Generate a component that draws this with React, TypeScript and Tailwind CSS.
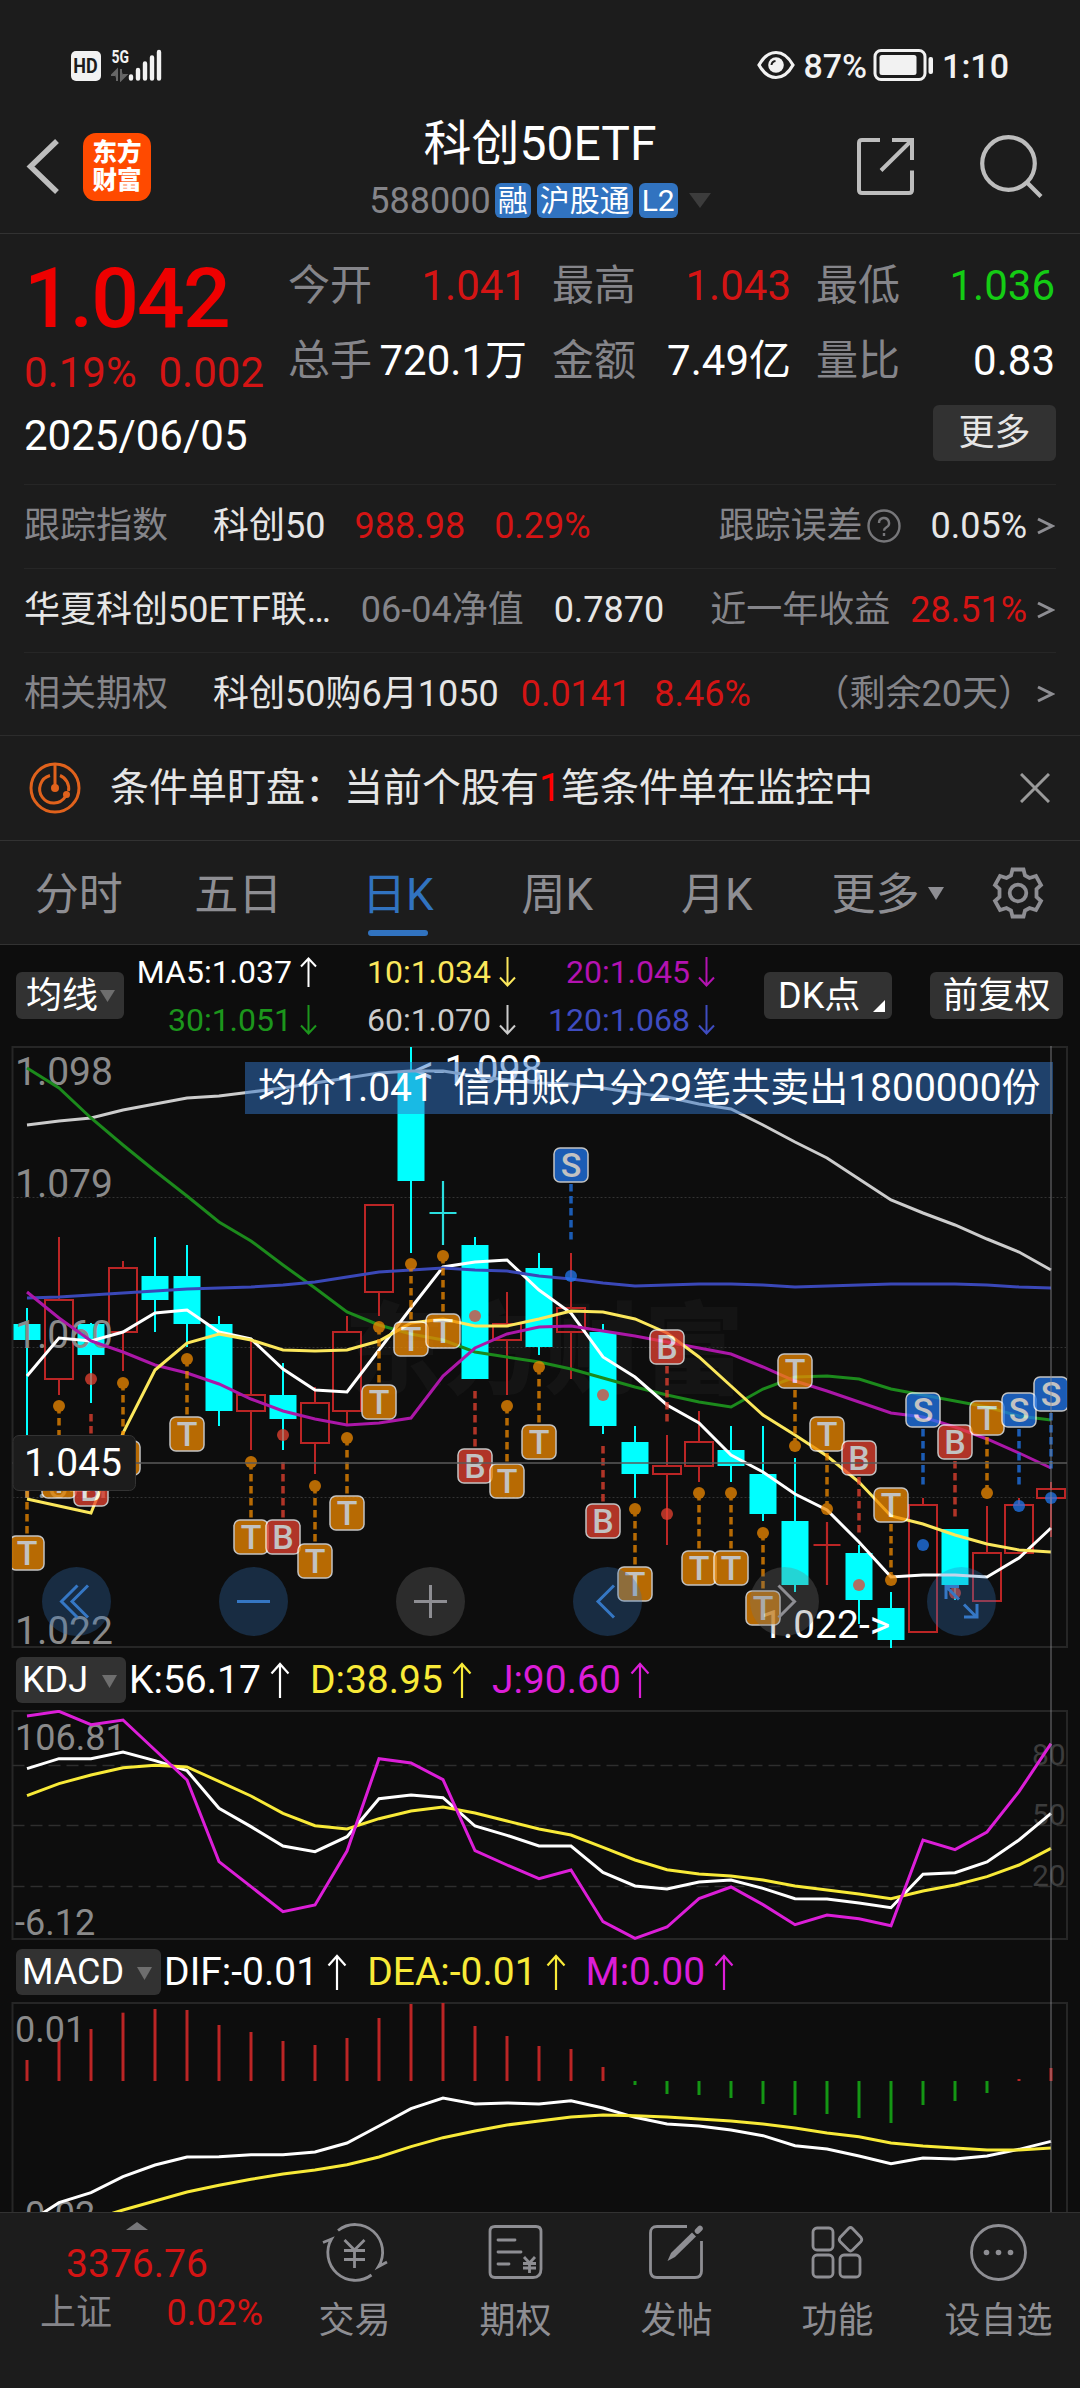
import type { ReactNode } from "react";

const X0 = 27;
const STEP = 32;
const cx = (i: number) => X0 + i * STEP;
const toPoints = (ys: number[]) => ys.map((y, i) => `${cx(i)},${y}`).join(" ");

const CYAN = "#00ffff";
const RED = "#bb2525";

// [up/down, high, low, body top, body bottom]
type Candle = ["u" | "d", number, number, number, number];

const CANDLES: Candle[] = [
  ["d", 1308, 1470, 1324, 1340],
  ["u", 1237, 1395, 1300, 1379],
  ["d", 1323, 1403, 1324, 1355],
  ["u", 1261, 1371, 1268, 1332],
  ["d", 1237, 1332, 1276, 1300],
  ["d", 1245, 1347, 1276, 1324],
  ["d", 1316, 1426, 1324, 1411],
  ["u", 1340, 1450, 1395, 1411],
  ["d", 1363, 1450, 1395, 1419],
  ["u", 1387, 1474, 1403, 1443],
  ["u", 1316, 1425, 1332, 1411],
  ["u", 1205, 1316, 1205, 1292],
  ["d", 1047, 1253, 1071, 1181],
  ["d", 1181, 1245, 1213, 1213],
  ["d", 1237, 1379, 1245, 1379],
  ["u", 1292, 1395, 1324, 1340],
  ["d", 1253, 1355, 1268, 1347],
  ["u", 1253, 1379, 1308, 1332],
  ["d", 1324, 1434, 1332, 1426],
  ["d", 1426, 1498, 1442, 1474],
  ["u", 1435, 1545, 1466, 1474],
  ["u", 1411, 1482, 1442, 1466],
  ["d", 1426, 1482, 1450, 1466],
  ["d", 1426, 1521, 1474, 1514],
  ["d", 1458, 1592, 1521, 1585],
  ["u", 1522, 1585, 1545, 1545],
  ["d", 1545, 1624, 1553, 1600],
  ["d", 1592, 1648, 1608, 1640],
  ["u", 1498, 1632, 1505, 1632],
  ["d", 1529, 1600, 1529, 1585],
  ["u", 1506, 1601, 1553, 1601],
  ["u", 1498, 1553, 1505, 1553],
  ["u", 1482, 1537, 1489, 1498],
];

const MA_LINES = [
  {
    color: "#cccccc",
    ys: [1125, 1121, 1118, 1110, 1104, 1098, 1096, 1092, 1088, 1083, 1078, 1073, 1071, 1071, 1076, 1080, 1083, 1084, 1088, 1093, 1097, 1104, 1109, 1125, 1142, 1158, 1179, 1200, 1213, 1225, 1239, 1252, 1270],
  },
  {
    color: "#1c8a1c",
    ys: [1068, 1088, 1118, 1145, 1171, 1196, 1222, 1241, 1265, 1288, 1312, 1325, 1334, 1340, 1352, 1357, 1362, 1369, 1378, 1387, 1395, 1402, 1407, 1389, 1377, 1376, 1379, 1389, 1395, 1401, 1407, 1416, 1420],
  },
  {
    color: "#ffffff",
    ys: [1376, 1338, 1341, 1332, 1313, 1310, 1332, 1339, 1369, 1390, 1392, 1350, 1308, 1267, 1262, 1260, 1290, 1313, 1357, 1377, 1405, 1423, 1455, 1472, 1494, 1510, 1542, 1577, 1575, 1575, 1577, 1558, 1528],
  },
  {
    color: "#3a48b8",
    ys: [1298, 1297, 1295, 1293, 1291, 1289, 1288, 1287, 1285, 1282, 1277, 1272, 1270, 1268, 1270, 1271, 1276, 1279, 1283, 1286, 1285, 1284, 1284, 1285, 1287, 1286, 1285, 1284, 1284, 1284, 1285, 1287, 1288],
  },
  {
    color: "#ab17a8",
    ys: [1292, 1318, 1341, 1352, 1365, 1373, 1384, 1399, 1411, 1419, 1425, 1423, 1418, 1376, 1348, 1334, 1327, 1326, 1331, 1336, 1342, 1348, 1354, 1367, 1381, 1391, 1402, 1413, 1417, 1427, 1439, 1453, 1468],
  },
  {
    color: "#fbe75c",
    ys: [1499, 1506, 1513, 1433, 1370, 1343, 1334, 1340, 1350, 1351, 1350, 1341, 1323, 1319, 1326, 1326, 1319, 1311, 1312, 1319, 1333, 1357, 1386, 1415, 1435, 1456, 1482, 1516, 1524, 1535, 1544, 1550, 1552],
  },
];

// index, letter, tag centre, dot centre
type Mark = [number, "T" | "B" | "S", number, number];

const MARKS: Mark[] = [
  [0, "T", 1553, 1478],
  [1, "T", 1481, 1406],
  [2, "B", 1489, 1379],
  [3, "T", 1458, 1383],
  [5, "T", 1434, 1359],
  [7, "T", 1537, 1462],
  [8, "B", 1537, 1435],
  [9, "T", 1561, 1486],
  [10, "T", 1513, 1438],
  [11, "T", 1402, 1327],
  [12, "T", 1339, 1264],
  [13, "T", 1331, 1256],
  [14, "B", 1466, 1316],
  [15, "T", 1481, 1406],
  [16, "T", 1442, 1367],
  [17, "S", 1165, 1276],
  [18, "B", 1521, 1395],
  [19, "T", 1584, 1509],
  [20, "B", 1347, 1514],
  [21, "T", 1568, 1493],
  [22, "T", 1568, 1493],
  [23, "T", 1608, 1533],
  [24, "T", 1371, 1446],
  [25, "T", 1434, 1509],
  [26, "B", 1458, 1585],
  [27, "T", 1505, 1580],
  [28, "S", 1410, 1545],
  [29, "B", 1442, 1593],
  [30, "T", 1418, 1493],
  [31, "S", 1410, 1506],
  [32, "S", 1394, 1498],
];

const MARK_COLORS = { T: "#f08a00", B: "#e74130", S: "#2077ed" };

const kdjY = (p: number) => 1640 + p / 3;
const KDJ_K = [386, 356, 356, 336, 362, 392, 505, 560, 618, 635, 590, 476, 465, 473, 558, 586, 618, 618, 697, 738, 747, 726, 720, 745, 776, 777, 789, 803, 703, 698, 666, 600, 520].map(kdjY);
const KDJ_D = [467, 431, 405, 383, 376, 381, 424, 468, 520, 557, 567, 536, 513, 501, 519, 543, 567, 585, 622, 660, 689, 702, 708, 720, 738, 750, 762, 776, 753, 735, 710, 675, 625].map(kdjY);
const KDJ_J = [228, 214, 254, 240, 330, 420, 665, 740, 815, 795, 633, 356, 369, 419, 632, 675, 716, 690, 845, 895, 861, 776, 741, 794, 854, 825, 836, 857, 600, 629, 576, 455, 311].map(kdjY);

const macdY = (p: number) => 1980 + p / 3;
const MACD_ZERO = 2081;
const MACD_BARS = [240, 180, 147, 98, 87, 90, 135, 156, 183, 195, 174, 114, 72, 69, 138, 168, 198, 207, 261, 315, 342, 345, 354, 372, 405, 402, 414, 429, 375, 363, 339, 297, 264].map(macdY);
const MACD_DIF = [730, 668, 638, 590, 555, 531, 530, 524, 524, 516, 489, 438, 386, 354, 372, 369, 372, 362, 384, 412, 432, 438, 450, 467, 497, 507, 528, 551, 534, 537, 528, 508, 484].map(macdY);
const MACD_DEA = [790, 752, 720, 690, 663, 636, 616, 598, 582, 570, 554, 531, 500, 473, 453, 435, 423, 411, 405, 407, 411, 417, 423, 432, 444, 459, 470, 489, 498, 504, 510, 510, 504].map(macdY);

function StatusBar() {
  return (
    <div className="flex h-[87px] items-end justify-between pr-[71px] pb-[5px] pl-[71px] text-[#f2f2f2]">
      <div className="flex items-end">
        <div className="mb-px flex h-[30px] w-[30px] items-center justify-center rounded-[5px] bg-[#f2f2f2] text-[20px] leading-none font-bold text-[#1c1c1c]">
          <span className="scale-x-90">HD</span>
        </div>
        <svg className="ml-[10px]" width="52" height="34" viewBox="111 48 52 34">
          <text x="111.500" y="63.300" fontSize="18.500" fontWeight="700" fill="#f2f2f2" textLength="17.500" lengthAdjust="spacingAndGlyphs">5G</text>
          <path d="M117 81V70L112 75H115M121 69V80L126 75H123" fill="#666" stroke="#666" strokeWidth="2" />
          <g stroke="#f2f2f2" strokeWidth="4.400" strokeLinecap="round">
            <path d="M131 76.500v2M138 70v8.500M145 63.500v15M152 57.500v21M159 52v26.500" />
          </g>
        </svg>
      </div>
      <div className="flex h-[34px] items-center text-[34px] leading-none font-medium">
        <svg width="38" height="30" viewBox="0 0 38 30" fill="none">
          <path d="M2 15C7 6 13 2.500 19 2.500S31 6 36 15C31 24 25 27.500 19 27.500S7 24 2 15Z" stroke="#f2f2f2" strokeWidth="3.200" />
          <circle cx="19" cy="15" r="7.800" fill="#f2f2f2" />
          <path d="M14.500 15a4.500 4.500 0 0 1 4-4" stroke="#1c1c1c" strokeWidth="2" />
        </svg>
        <span className="mt-px ml-[8px]">87%</span>
        <svg className="ml-[6px]" width="62" height="34" viewBox="0 0 62 34">
          <rect x="2" y="2.500" width="50" height="29" rx="6" fill="none" stroke="#f2f2f2" strokeWidth="3" />
          <rect x="6.500" y="7" width="37" height="20" rx="2.500" fill="#f2f2f2" />
          <rect x="55.500" y="9" width="4.500" height="17" rx="2" fill="#f2f2f2" />
        </svg>
        <span className="mt-px ml-[7px]">1:10</span>
      </div>
    </div>
  );
}

const BADGES = ["融", "沪股通", "L2"];

function Header() {
  return (
    <header className="flex h-[147px] items-start border-b border-[#323232] pr-[36px] pl-[26px]">
      <svg className="mt-[51px]" width="34" height="56" viewBox="26 138 34 56" fill="none">
        <path d="M57 141L30.500 166.500L57 192" stroke="#bdbdbd" strokeWidth="5.500" />
      </svg>
      <div className="mt-[46px] ml-[23px] flex h-[68px] w-[68px] flex-col items-center justify-center rounded-[13px] bg-[#ff4a00] text-[24.500px] leading-[28px] font-black text-white">
        <span>东方</span>
        <span>财富</span>
      </div>
      <div className="ml-[217px] flex w-[344px] flex-col items-center">
        <h1 className="mt-[33px] text-[48px] leading-[48px] text-white">科创50ETF</h1>
        <div className="mt-[15px] flex h-[35px] items-center text-[36px] leading-none whitespace-nowrap text-[#85858a]">
          <span className="-mr-[2px]">588000</span>
          {BADGES.map((b) => (
            <span key={b} className="ml-[6px] flex h-[35px] items-center rounded-[6px] bg-[#3173c0] px-[3px] text-[30px] leading-none text-white">
              {b}
            </span>
          ))}
          <svg className="ml-[11px]" width="22" height="15" viewBox="0 0 22 15">
            <path d="M0 0H22L11 15Z" fill="#3c3c3c" />
          </svg>
        </div>
      </div>
      <svg className="mt-[49px] ml-auto" width="62" height="62" viewBox="856 136 62 62" fill="none" stroke="#bdbdbd" strokeWidth="4">
        <path d="M881 140H863Q860 140 860 143V190Q860 193 863 193H910Q913 193 913 190V170.500" />
        <path d="M893 140H913V160M912 141L882 170.500" />
      </svg>
      <svg className="mt-[47px] ml-[61px]" width="66" height="66" viewBox="979 134 66 66" fill="none" stroke="#bdbdbd" strokeWidth="4.200">
        <circle cx="1009.500" cy="163.500" r="26.300" />
        <path d="M1028 182.500L1042 196.500" />
      </svg>
    </header>
  );
}

const QUOTES = [
  { label: "今开", value: "1.041", tone: "text-[#d41414]" },
  { label: "最高", value: "1.043", tone: "text-[#d41414]" },
  { label: "最低", value: "1.036", tone: "text-[#14cc14]" },
  { label: "总手", value: "720.1万", tone: "text-white" },
  { label: "金额", value: "7.49亿", tone: "text-white" },
  { label: "量比", value: "0.83", tone: "text-white" },
];

function Quote() {
  return (
    <section className="h-[250px] px-[24px] text-[42px] leading-none">
      <div className="flex h-[163px]">
        <div className="w-[264px] text-[#d41414]">
          <div className="mt-[23px] text-[84px] leading-[84px] font-medium tracking-[-1.900px] text-[#ee0000]">1.042</div>
          <div className="mt-[11px] flex justify-between pr-[24px] leading-[42px]">
            <span>0.19%</span>
            <span>0.002</span>
          </div>
        </div>
        <div className="mt-[31px] grid w-[767px] grid-cols-3 gap-x-[25px] gap-y-[33px] self-start">
          {QUOTES.map((q) => (
            <div key={q.label} className="flex h-[42px] items-center justify-between whitespace-nowrap">
              <span className="text-[#85858a]">{q.label}</span>
              <span className={q.tone}>{q.value}</span>
            </div>
          ))}
        </div>
      </div>
      <div className="mt-[8px] flex h-[56px] items-center justify-between">
        <span className="mt-[5px] text-white">2025/06/05</span>
        <button className="h-[56px] w-[123px] rounded-[6px] bg-[#323232] text-[36px] leading-none text-[#e6e6e6]">更多</button>
      </div>
    </section>
  );
}

function InfoRow({ children }: { children: ReactNode }) {
  return (
    <div className="mx-[24px] flex h-[84px] items-center border-t border-[#262626] pr-px pb-[2px] text-[36px] leading-none whitespace-nowrap text-[#e6e6e6]">
      {children}
      <svg className="ml-[9px]" width="19" height="20" viewBox="0 0 19 20" fill="none">
        <path d="M2 3L16 10L2 17" stroke="#8e8e93" strokeWidth="3" />
      </svg>
    </div>
  );
}

function InfoRows() {
  return (
    <section className="h-[251px]">
      <InfoRow>
        <span className="text-[#85858a]">跟踪指数</span>
        <span className="ml-[45px]">科创50</span>
        <span className="ml-[29px] text-[#d41414]">988.98</span>
        <span className="ml-[29px] text-[#d41414]">0.29%</span>
        <span className="ml-auto text-[#85858a]">跟踪误差</span>
        <svg className="ml-[5px]" width="34" height="34" viewBox="0 0 34 34" fill="none">
          <circle cx="17" cy="17" r="15.500" stroke="#77777a" strokeWidth="2.400" />
          <path d="M12 14a5 5 0 1 1 7.500 4.300c-1.800 1-2.500 1.700-2.500 3.500M17 24v3" stroke="#77777a" strokeWidth="2.400" />
        </svg>
        <span className="ml-[29px]">0.05%</span>
      </InfoRow>
      <InfoRow>
        <span>华夏科创50ETF联…</span>
        <span className="ml-[30px] text-[#85858a]">06-04净值</span>
        <span className="ml-[30px]">0.7870</span>
        <span className="ml-auto text-[#85858a]">近一年收益</span>
        <span className="ml-[20px] text-[#d41414]">28.51%</span>
      </InfoRow>
      <InfoRow>
        <span className="text-[#85858a]">相关期权</span>
        <span className="ml-[45px]">科创50购6月1050</span>
        <span className="ml-[22px] text-[#d41414]">0.0141</span>
        <span className="ml-[23px] text-[#d41414]">8.46%</span>
        <span className="-mr-[7px] ml-auto text-[#85858a]">（剩余20天）</span>
      </InfoRow>
    </section>
  );
}

function AlertBar() {
  return (
    <div className="flex h-[105px] items-center border-t border-[#2c2c2c] pr-[30px] pl-[28px] text-[39px] leading-none text-[#e6e6e6]">
      <svg width="54" height="54" viewBox="0 0 54 54" fill="none" stroke="#e0621c" strokeWidth="3">
        <circle cx="27" cy="27" r="24" />
        <path d="M22 14.500A14 14 0 1 0 37.500 35.500M32 14.500A14 14 0 0 1 40.500 30" />
        <path d="M27 3V27" />
        <circle cx="27" cy="27" r="4" fill="#e0621c" stroke="none" />
        <circle cx="38.500" cy="33.500" r="3.500" fill="#e0621c" stroke="none" />
      </svg>
      <span className="ml-[28px] whitespace-nowrap">
        条件单盯盘：当前个股有<span className="text-[#ff0000]">1</span>笔条件单在监控中
      </span>
      <svg className="ml-auto" width="30" height="30" viewBox="0 0 30 30" stroke="#9a9a9a" strokeWidth="3">
        <path d="M1 1L29 29M29 1L1 29" />
      </svg>
    </div>
  );
}

const TABS = ["分时", "五日", "日K", "周K", "月K"];

function Tabs() {
  return (
    <nav className="flex h-[105px] items-center border-y border-[#323232] text-[44px] leading-none text-[#8e8e93]">
      {TABS.map((tab) => {
        const active = tab === "日K";
        return (
          <div key={tab} className={`relative flex h-full w-[159.500px] items-center justify-center pt-[4px] pr-[2px] ${active ? "text-[#3173c0]" : ""}`}>
            {tab}
            {active && <div className="absolute bottom-[8px] left-[49px] h-[6px] w-[60px] rounded-full bg-[#3173c0]" />}
          </div>
        );
      })}
      <div className="ml-[34px] flex items-center pt-[4px]">
        更多
        <svg className="mb-[3px] ml-[8px]" width="16" height="13" viewBox="0 0 16 13">
          <path d="M0 0H16L8 13Z" fill="#8e8e93" />
        </svg>
      </div>
      <svg className="ml-[46px]" width="56" height="56" viewBox="-28 -28 56 56" fill="none" stroke="#8e8e93" strokeWidth="3.800">
        <path d="M-5.500 -23.500H5.500L7 -17.500L11.500 -15L18 -17L23 -8L18.500 -4V4L23 8L18 17L11.500 15L7 17.500L5.500 23.500H-5.500L-7 17.500L-11.500 15L-18 17L-23 8L-18.500 4V-4L-23 -8L-18 -17L-11.500 -15L-7 -17.500Z" />
        <circle r="8.300" />
      </svg>
    </nav>
  );
}

function Arrow({ up, small }: { up?: boolean; small?: boolean }) {
  return (
    <svg
      className={`shrink-0 ${up ? "" : "rotate-180"}`}
      width={small ? 17 : 20}
      height={small ? 30 : 36}
      viewBox={small ? "0 0 17 30" : "0 0 20 36"}
      fill="none"
      stroke="currentColor"
      strokeWidth={small ? 2 : 2.2}
    >
      <path d={small ? "M8.500 30V1.500M1 9.500L8.500 1.500L16 9.500" : "M10 36V2M1.500 11.500L10 2L18.500 11.500"} />
    </svg>
  );
}

function MaCell({ text, tone, up }: { text: string; tone: string; up?: boolean }) {
  return (
    <div className={`flex items-center justify-end gap-[8px] ${tone}`}>
      {text}
      <Arrow small up={up} />
    </div>
  );
}

function MaPanel() {
  return (
    <div className="flex h-[101px] pl-[16px] leading-none">
      <div className="mt-[27px] flex h-[47px] w-[108px] items-center rounded-[6px] bg-[#323232] pl-[10px] text-[36px] text-white">
        <span>均线</span>
        <svg className="ml-[2px]" width="15" height="12" viewBox="0 0 15 12">
          <path d="M0 0H15L7.500 12Z" fill="#6e6e6e" />
        </svg>
      </div>
      <div className="mt-[9px] grid grid-cols-[193px_199px_199px] grid-rows-[36px_36px] gap-y-[12px] text-[32px] whitespace-nowrap">
        <MaCell text="MA5:1.037" tone="text-white" up />
        <MaCell text="10:1.034" tone="text-[#fbe75c]" />
        <MaCell text="20:1.045" tone="text-[#b412b1]" />
        <MaCell text="30:1.051" tone="text-[#1c961c]" />
        <MaCell text="60:1.070" tone="text-[#cccccc]" />
        <MaCell text="120:1.068" tone="text-[#3f4cc0]" />
      </div>
      <div className="relative mt-[27px] ml-[49px] flex h-[47px] w-[128px] items-center rounded-[6px] bg-[#323232] pl-[14px] text-[36px] text-white">
        DK点
        <svg className="absolute right-[7px] bottom-[7px]" width="12" height="12" viewBox="0 0 12 12">
          <path d="M12 0V12H0Z" fill="#fff" />
        </svg>
      </div>
      <div className="mt-[27px] ml-[38px] flex h-[47px] w-[133px] items-center justify-center rounded-[6px] bg-[#323232] text-[36px] whitespace-nowrap text-white">前复权</div>
    </div>
  );
}

function CandleShape({ i, candle }: { i: number; candle: Candle }) {
  const [dir, high, low, top, bottom] = candle;
  const x = cx(i);
  const color = dir === "u" ? RED : CYAN;
  if (top === bottom) {
    return <path d={`M${x} ${high}V${low}M${x - 13.5} ${top}H${x + 13.5}`} stroke={dir === "u" ? RED : "#2adfe0"} strokeWidth="2.200" />;
  }
  return (
    <g stroke={color} strokeWidth="2">
      <path d={`M${x} ${high}V${top}M${x} ${bottom}V${low}`} />
      {dir === "u" ? (
        <rect x={x - 14} y={top} width="28" height={bottom - top} fill="none" />
      ) : (
        <rect x={x - 13.5} y={top} width="27" height={bottom - top} fill={color} stroke="none" />
      )}
    </g>
  );
}

function MarkShape({ mark: [i, letter, tagY, dotY] }: { mark: Mark }) {
  const x = cx(i);
  const color = MARK_COLORS[letter];
  const below = tagY > dotY;
  return (
    <g opacity="0.75">
      <path d={below ? `M${x} ${tagY - 75}V${tagY - 18}` : `M${x} ${tagY + 19}V${tagY + 75}`} stroke={color} strokeWidth="3.500" strokeDasharray="7.500 4.500" />
      <circle cx={x} cy={dotY} r="6" fill={color} />
      <rect x={x - 17} y={tagY - 17} width="34" height="34" rx="6" fill={color} stroke="#fff" strokeWidth="1.500" />
      <text x={x} y={tagY + 12} fontSize="34" fontWeight="500" textAnchor="middle" fill="#fff">{letter}</text>
    </g>
  );
}

function RoundButton({ gray, children }: { gray?: boolean; children: ReactNode }) {
  return (
    <button className={`h-[69px] w-[69px] rounded-full ${gray ? "bg-[#737373]/30 text-[#8e8e93]" : "bg-[#3175be]/30 text-[#3577c4]"}`}>
      <svg width="69" height="69" viewBox="0 0 69 69" fill="none" stroke="currentColor" strokeWidth="3">
        {children}
      </svg>
    </button>
  );
}

function PriceChart() {
  return (
    <div className="relative">
      <svg className="block" width="1080" height="602" viewBox="0 1046 1080 602">
        <defs>
          <clipPath id="plot">
            <rect x="12" y="1046" width="1055" height="602" />
          </clipPath>
        </defs>
        <text x="344" y="1386" fontSize="100" fontWeight="900" fill="#141414">东方财富</text>
        <path d="M12.500 1197.500H1067M12.500 1347.500H1067M12.500 1497.500H1067" stroke="#333" strokeWidth="1" strokeDasharray="2 2" />
        <rect x="12.500" y="1047" width="1054.500" height="600" fill="none" stroke="#262626" strokeWidth="2" />
        <g clipPath="url(#plot)">
          {CANDLES.map((c, i) => (
            <CandleShape key={i} i={i} candle={c} />
          ))}
          <g fontSize="39" fill="#8a8a8a">
            <text x="15" y="1085">1.098</text>
            <text x="15" y="1197">1.079</text>
            <text x="15" y="1348">1.060</text>
            <text x="15" y="1498">1.041</text>
            <text x="15" y="1643.500">1.022</text>
          </g>
          <g fontSize="39" fill="#fff">
            <text x="414" y="1083">&lt;-1.098</text>
            <text x="761" y="1638">1.022-&gt;</text>
          </g>
          {MA_LINES.map((l) => (
            <polyline key={l.color} points={toPoints(l.ys)} fill="none" stroke={l.color} strokeWidth="3" />
          ))}
          {MARKS.map((m) => (
            <MarkShape key={m[0]} mark={m} />
          ))}
        </g>
        <path d="M12.500 1463H1067" stroke="#5a5a5a" strokeWidth="1.500" />
        <rect x="13" y="1435.500" width="122.500" height="55" rx="6" fill="#1c1c1c" stroke="#333" />
        <text x="24" y="1476" fontSize="39" fill="#fff">1.045</text>
      </svg>
      <div className="absolute top-[16px] left-[245px] flex h-[52px] w-[808px] items-center bg-[#3175c9]/50 pl-[13px] text-[39px] leading-none whitespace-pre text-white">
        {"均价1.041  信用账户分29笔共卖出1800000份"}
      </div>
      <div className="absolute top-[521px] left-[42px] flex gap-[108px]">
        <RoundButton>
          <path d="M35.500 18.500L19.500 34.500L35.500 50.500M46 18.500L30 34.500L46 50.500" />
        </RoundButton>
        <RoundButton>
          <path d="M18 34.500H51" />
        </RoundButton>
        <RoundButton gray>
          <path d="M18 34.500H51M34.500 18V51" />
        </RoundButton>
        <RoundButton>
          <path d="M41 18.500L25 34.500L41 50.500" />
        </RoundButton>
        <RoundButton gray>
          <path d="M28.500 18.500L44.500 34.500L28.500 50.500" />
        </RoundButton>
        <RoundButton>
          <path d="M19 32V19.500H32M20 20.500L32 32.500M50 37V50H37M49 49.500L37 37.500" />
        </RoundButton>
      </div>
    </div>
  );
}

function IndicatorHeader({ name, items }: { name: string; items: { text: string; tone: string }[] }) {
  return (
    <div className="flex h-[62px] items-center pt-[2px] pl-[16px] text-[39px] leading-none">
      <div className="mr-[3px] flex h-[46px] min-w-[110px] items-center justify-between rounded-[6px] bg-[#323232] pr-[9px] pl-[6px] text-[36px] text-white">
        {name}
        <svg className="mt-[2px] ml-[13px]" width="15" height="13" viewBox="0 0 15 13">
          <path d="M0 0H15L7.500 13Z" fill="#6e6e6e" />
        </svg>
      </div>
      {items.map((it) => (
        <div key={it.text} className={`mr-[20px] flex items-center gap-[9px] ${it.tone}`}>
          {it.text}
          <Arrow up />
        </div>
      ))}
    </div>
  );
}

function KdjChart() {
  return (
    <svg className="block" width="1080" height="230" viewBox="0 1710 1080 230">
      <rect x="12.500" y="1711" width="1054.500" height="228" fill="none" stroke="#262626" strokeWidth="2" />
      <path d="M12.500 1765.500H1067M12.500 1825.500H1067M12.500 1886.500H1067" stroke="#2e2e2e" strokeWidth="1.500" strokeDasharray="12 6" />
      <g fontSize="30" fill="#3c3c3c">
        <text x="1032" y="1765">80</text>
        <text x="1032" y="1825">50</text>
        <text x="1032" y="1886">20</text>
      </g>
      <g fontSize="36" fill="#8a8a8a">
        <text x="15" y="1750">106.81</text>
        <text x="15" y="1934.500">-6.12</text>
      </g>
      <g fill="none" strokeWidth="3">
        <polyline points={toPoints(KDJ_K)} stroke="#fff" />
        <polyline points={toPoints(KDJ_D)} stroke="#f8ea38" />
        <polyline points={toPoints(KDJ_J)} stroke="#dc1ed8" />
      </g>
    </svg>
  );
}

function MacdChart() {
  return (
    <svg className="block" width="1080" height="210" viewBox="0 2002 1080 210">
      <path d="M12.500 2212V2003H1067V2212" fill="none" stroke="#262626" strokeWidth="2" />
      {MACD_BARS.map((y, i) => (
        <path key={i} d={`M${cx(i)} ${MACD_ZERO}V${y}`} stroke={y < MACD_ZERO ? RED : "#149614"} strokeWidth="3" />
      ))}
      <g fontSize="36" fill="#8a8a8a">
        <text x="15" y="2042">0.01</text>
        <text x="15" y="2227">-0.02</text>
      </g>
      <g fill="none" strokeWidth="3">
        <polyline points={toPoints(MACD_DIF)} stroke="#fff" />
        <polyline points={toPoints(MACD_DEA)} stroke="#f8ea38" />
      </g>
    </svg>
  );
}

const NAV_ITEMS = [
  {
    label: "交易",
    icon: (
      <>
        <path d="M16 8.500A27.500 27.500 0 0 1 56.500 44.500L65 40M49.500 53A27.500 27.500 0 0 1 9.500 17L1 20.500" />
        <path d="M22.500 18L32.500 28L42.500 18M32.500 28V46M22 28.500H43M22 37.500H43" />
      </>
    ),
  },
  {
    label: "期权",
    icon: (
      <>
        <path d="M12 4.500H53Q58 4.500 58 9.500V47Q58 55.500 50 55.500H12Q7 55.500 7 50.500V9.500Q7 4.500 12 4.500Z" />
        <path d="M15 18H32M15 30H38M15 42H26" strokeLinecap="round" />
        <path d="M41 35L46.500 41L52 35M46.500 41V51M40 41.500H53M40 46H53" />
      </>
    ),
  },
  {
    label: "发帖",
    icon: (
      <>
        <path d="M43 4.500H13Q6.500 4.500 6.500 11V49Q6.500 55.500 13 55.500H51Q57.500 55.500 57.500 49V19" />
        <path d="M23.500 39L27 31L48 10.500L52 14.500L31 35Z" fill="currentColor" stroke="none" />
        <path d="M53.500 9L56 6.500" strokeWidth="5.500" strokeLinecap="round" />
      </>
    ),
  },
  {
    label: "功能",
    icon: (
      <>
        <rect x="8" y="6" width="20" height="22" rx="4" />
        <rect x="8" y="33" width="20" height="22" rx="4" />
        <rect x="35" y="33" width="20" height="22" rx="4" />
        <path d="M43.500 6.500Q45.500 4.500 47.500 6.500L56 15.500Q57.500 17.500 56 19.500L47.500 28Q45.500 30 43.500 28L35 19.500Q33.500 17.500 35 15.500Z" />
      </>
    ),
  },
  {
    label: "设自选",
    icon: (
      <>
        <circle cx="32.500" cy="30.500" r="27" />
        <g fill="currentColor" stroke="none">
          <circle cx="20.500" cy="30.500" r="2.800" />
          <circle cx="32.500" cy="30.500" r="2.800" />
          <circle cx="44.500" cy="30.500" r="2.800" />
        </g>
      </>
    ),
  },
];

function BottomNav() {
  return (
    <footer className="flex h-[176px] border-t border-[#323232] bg-[#1c1c1c] text-[36px] leading-none">
      <div className="flex w-[274px] flex-col items-center text-[#d41414]">
        <svg className="mt-[9px]" width="22" height="8" viewBox="0 0 22 8">
          <path d="M0 8L11 0L22 8Z" fill="#77777a" />
        </svg>
        <span className="mt-[15px] text-[39px]">3376.76</span>
        <div className="mt-[11px] flex w-[224px] justify-between">
          <span className="ml-[15px] text-[#85858a]">上证</span>
          <span className="-mr-[14px]">0.02%</span>
        </div>
      </div>
      {NAV_ITEMS.map((item) => (
        <div key={item.label} className="flex w-[161px] flex-col items-center text-[#8e8e93]">
          <svg className="mt-[9px]" width="65" height="60" viewBox="0 0 65 60" fill="none" stroke="currentColor" strokeWidth="2.800" overflow="visible">
            {item.icon}
          </svg>
          <span className="mt-[21px]">{item.label}</span>
        </div>
      ))}
    </footer>
  );
}

export default function App() {
  return (
    <div className="h-[2388px] w-[1080px] overflow-hidden bg-[#1c1c1c] font-['Roboto','Noto_Sans_CJK_SC',sans-serif]">
      <StatusBar />
      <Header />
      <Quote />
      <InfoRows />
      <AlertBar />
      <Tabs />
      <main className="relative bg-[#0d0d0d]">
        <MaPanel />
        <PriceChart />
        <IndicatorHeader
          name="KDJ"
          items={[
            { text: "K:56.17", tone: "text-white" },
            { text: "D:38.95", tone: "text-[#f8ea38]" },
            { text: "J:90.60", tone: "text-[#dc1ed8]" },
          ]}
        />
        <KdjChart />
        <IndicatorHeader
          name="MACD"
          items={[
            { text: "DIF:-0.01", tone: "text-white" },
            { text: "DEA:-0.01", tone: "text-[#f8ea38]" },
            { text: "M:0.00", tone: "text-[#dc1ed8]" },
          ]}
        />
        <MacdChart />
        {/* crosshair, runs through all three plots */}
        <div className="absolute top-[101px] bottom-0 left-[1050px] w-[2px] bg-[#8e8e93]/40" />
      </main>
      <BottomNav />
    </div>
  );
}
